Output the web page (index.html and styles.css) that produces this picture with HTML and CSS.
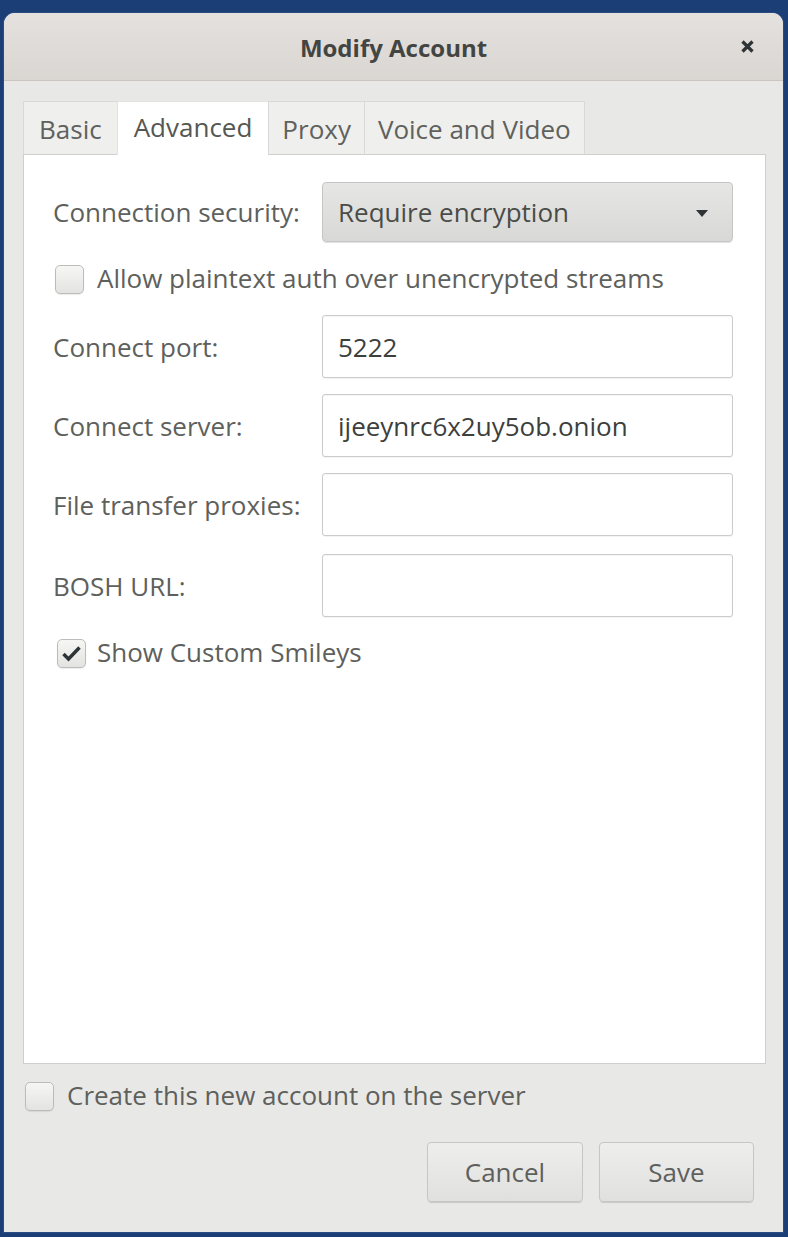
FILE: index.html
```html
<!DOCTYPE html>
<html>
<head>
<meta charset="utf-8">
<title>Modify Account</title>
<link rel="stylesheet" href="styles.css">
</head>
<body>
<div class="window">
  <div class="titlebar">
    <div class="spacer"></div>
    <div class="title">Modify Account</div>
    <div class="close">
      <svg width="15" height="15" viewBox="0 0 15 15"><path d="M2.5 2.5 L12.5 12.5 M12.5 2.5 L2.5 12.5" stroke="#2e3436" stroke-width="3.2" stroke-linecap="butt"/></svg>
    </div>
  </div>
  <div class="content">
    <div class="tabs">
      <div class="tab tab-basic">Basic</div>
      <div class="tab active">Advanced</div>
      <div class="tab">Proxy</div>
      <div class="tab">Voice and Video</div>
    </div>
    <div class="panel">
      <div class="row row-combo">
        <div class="label">Connection security:</div>
        <div class="combo">
          <span>Require encryption</span>
          <span class="arrow"></span>
        </div>
      </div>
      <div class="check-row check-plain">
        <span class="checkbox"></span>
        <span class="check-text">Allow plaintext auth over unencrypted streams</span>
      </div>
      <div class="row row-port">
        <div class="label">Connect port:</div>
        <div class="entry">5222</div>
      </div>
      <div class="row row-entry">
        <div class="label">Connect server:</div>
        <div class="entry">ijeeynrc6x2uy5ob.onion</div>
      </div>
      <div class="row row-entry">
        <div class="label">File transfer proxies:</div>
        <div class="entry"></div>
      </div>
      <div class="row row-bosh">
        <div class="label">BOSH URL:</div>
        <div class="entry"></div>
      </div>
      <div class="check-row check-smileys">
        <span class="checkbox checked">
          <svg width="21" height="17" viewBox="0 0 21 17"><path d="M2.5 9 L7.5 14 L18.5 2.5" fill="none" stroke="#2e3436" stroke-width="3.4" stroke-linejoin="miter"/></svg>
        </span>
        <span class="check-text">Show Custom Smileys</span>
      </div>
    </div>
    <div class="check-row check-create">
      <span class="checkbox"></span>
      <span class="check-text">Create this new account on the server</span>
    </div>
    <div class="buttons">
      <div class="button btn-cancel">Cancel</div>
      <div class="button btn-save">Save</div>
    </div>
  </div>
</div>
</body>
</html>
```

FILE: styles.css
```css
html, body {
  margin: 0;
  padding: 0;
}
body {
  background: #1b3e76;
  height: 1237px;
  overflow: hidden;
  font-family: "Open Sans", "Noto Sans", sans-serif;
  font-size: 26px;
  color: #555753;
}
.window {
  margin: 13px 5px 0 4px;
  height: 1219px;
  border-radius: 11px 11px 0 0;
  background: #e8e8e7;
  overflow: hidden;
  display: flex;
  flex-direction: column;
  box-shadow: 0 0 0 1px #2b4c80;
}
.titlebar {
  height: 67px;
  flex: 0 0 67px;
  background: linear-gradient(#e4e1de, #dad6d2);
  border-bottom: 1px solid #cbc5bf;
  display: grid;
  grid-template-columns: 1fr auto 1fr;
  align-items: center;
}
.title {
  font-weight: bold;
  font-size: 24px;
  color: #434542;
  padding-top: 1px;
}
.close {
  justify-self: end;
  margin-right: 28px;
  display: flex;
  align-items: center;
}
.content {
  flex: 1;
  padding: 19px 17px 0 19px;
  display: flex;
  flex-direction: column;
}
.tabs {
  display: flex;
  align-items: flex-end;
  height: 55px;
  margin-bottom: -1px;
  position: relative;
  z-index: 1;
}
.tab {
  height: 54px;
  box-sizing: border-box;
  padding: 2px 13px 0 13px;
  border: 1px solid #d9d9d7;
  border-bottom: 1px solid #cfcfcd;
  background: #efefee;
  display: flex;
  align-items: center;
  color: #5f615d;
  margin-right: -1px;
}
.tab.tab-basic {
  padding-left: 15px;
  padding-right: 15px;
}
.tab.active {
  background: #ffffff;
  border-color: #e2e2e0;
  border-bottom-color: #ffffff;
  padding: 0 16px 3px 16px;
  color: #555753;
}
.panel {
  height: 910px;
  box-sizing: border-box;
  background: #ffffff;
  border: 1px solid #cfcfcd;
  padding: 27px 32px 0 29px;
  display: flex;
  flex-direction: column;
}
.row {
  display: grid;
  grid-template-columns: 269px 1fr;
  align-items: center;
}
.label {
  color: #5e605c;
  white-space: nowrap;
}
.combo {
  height: 60px;
  box-sizing: border-box;
  border: 1px solid #c5c5c3;
  border-radius: 4px;
  background: linear-gradient(#e6e6e5, #d8d8d7);
  box-shadow: 0 2px 1px -1px rgba(0,0,0,0.12);
  display: flex;
  align-items: center;
  justify-content: space-between;
  padding: 0 24px 0 15px;
  color: #4a4c48;
}
.arrow {
  width: 0;
  height: 0;
  border-left: 6px solid transparent;
  border-right: 6px solid transparent;
  border-top: 7px solid #2e3436;
  margin-top: 2px;
}
.entry {
  height: 63px;
  box-sizing: border-box;
  border: 1px solid #cbcbc9;
  border-radius: 3px;
  background: #ffffff;
  box-shadow: inset 0 1px 1px rgba(0,0,0,0.04), 0 1px 1px rgba(0,0,0,0.05);
  display: flex;
  align-items: center;
  padding: 0 15px;
  color: #3d3f3c;
}
.row-port { margin-top: 21px; }
.row-entry { margin-top: 16px; }
.row-bosh { margin-top: 18px; }
.check-row {
  display: flex;
  align-items: center;
  height: 29px;
  line-height: 29px;
}
.check-plain { margin-top: 23px; margin-left: 2px; }
.check-smileys { margin-top: 22px; margin-left: 4px; }
.check-create { margin-top: 18px; margin-left: 2px; }
.checkbox {
  width: 29px;
  height: 29px;
  box-sizing: border-box;
  border: 1px solid #bcbcba;
  border-radius: 5px;
  background: linear-gradient(#f6f6f5, #e3e3e2);
  box-shadow: 0 1px 1px rgba(0,0,0,0.08);
  flex: 0 0 29px;
  display: flex;
  align-items: center;
  justify-content: center;
}
.check-text {
  margin-left: 13px;
  color: #5e605c;
  white-space: nowrap;
  padding-bottom: 2px;
}
.check-smileys .check-text { margin-left: 11px; }
.buttons {
  display: flex;
  justify-content: flex-end;
  gap: 16px;
  margin-top: 31px;
  margin-right: 12px;
}
.button {
  height: 60px;
  box-sizing: border-box;
  border: 1px solid #c6c6c4;
  border-radius: 4px;
  background: linear-gradient(#eeeeed, #e0e0df);
  box-shadow: 0 2px 1px -1px rgba(0,0,0,0.14);
  display: flex;
  align-items: center;
  justify-content: center;
  color: #5e605c;
}
.btn-cancel { width: 156px; }
.btn-save { width: 155px; }
```
